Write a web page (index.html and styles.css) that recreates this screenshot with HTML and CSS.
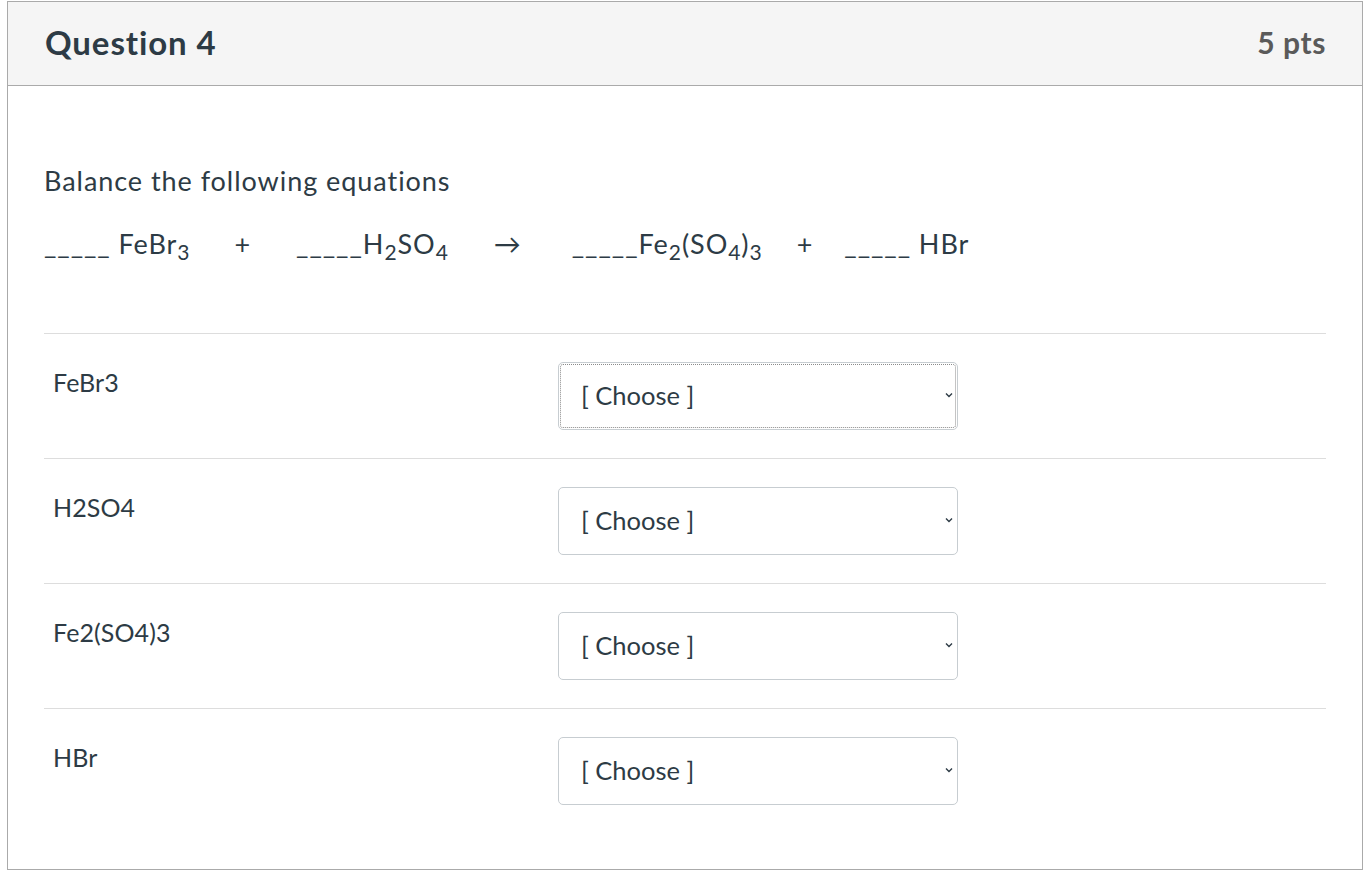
FILE: index.html
```html
<!DOCTYPE html>
<html>
<head>
<meta charset="utf-8">
<link rel="stylesheet" href="styles.css">
</head>
<body>
<div class="question">
  <div class="header">
    <div class="title">Question 4</div>
    <div class="pts">5 pts</div>
  </div>
  <div class="content">
    <p class="prompt">Balance the following equations</p>
    <div class="equation">
      <span class="t1">_____ FeBr<sub>3</sub></span>
      <span class="t2">+</span>
      <span class="t3">_____H<sub>2</sub>SO<sub>4</sub></span>
      <span class="t4">→</span>
      <span class="t5">_____Fe<sub>2</sub>(SO<sub>4</sub>)<sub>3</sub></span>
      <span class="t6">+</span>
      <span class="t7">_____ HBr</span>
    </div>
    <div class="answers">
      <div class="row">
        <div class="label">FeBr3</div>
        <div class="selwrap">
          <select class="sel focused"><option>[ Choose ]</option></select>
          <svg class="chev" width="10" height="8" viewBox="0 0 10 8"><path d="M2 2.5 L5 5.5 L8 2.5" fill="none" stroke="#2d3b45" stroke-width="1.4"/></svg>
        </div>
      </div>
      <div class="row">
        <div class="label">H2SO4</div>
        <div class="selwrap">
          <select class="sel"><option>[ Choose ]</option></select>
          <svg class="chev" width="10" height="8" viewBox="0 0 10 8"><path d="M2 2.5 L5 5.5 L8 2.5" fill="none" stroke="#2d3b45" stroke-width="1.4"/></svg>
        </div>
      </div>
      <div class="row">
        <div class="label">Fe2(SO4)3</div>
        <div class="selwrap">
          <select class="sel"><option>[ Choose ]</option></select>
          <svg class="chev" width="10" height="8" viewBox="0 0 10 8"><path d="M2 2.5 L5 5.5 L8 2.5" fill="none" stroke="#2d3b45" stroke-width="1.4"/></svg>
        </div>
      </div>
      <div class="row">
        <div class="label">HBr</div>
        <div class="selwrap">
          <select class="sel"><option>[ Choose ]</option></select>
          <svg class="chev" width="10" height="8" viewBox="0 0 10 8"><path d="M2 2.5 L5 5.5 L8 2.5" fill="none" stroke="#2d3b45" stroke-width="1.4"/></svg>
        </div>
      </div>
    </div>
  </div>
</div>
</body>
</html>
```
FILE: styles.css
```css
html, body {
  margin: 0;
  padding: 0;
  background: #fff;
}
body {
  padding: 1px 3px 0 7px;
  font-family: Lato, "Open Sans", sans-serif;
  color: #2d3b45;
}
.question {
  border: 1px solid #aaaaaa;
  box-sizing: border-box;
  height: 869px;
}
.header {
  background: #f5f5f5;
  border-bottom: 1px solid #aaaaaa;
  box-sizing: border-box;
  height: 84px;
  display: flex;
  justify-content: space-between;
  align-items: center;
  padding: 0 36px 4px 37px;
}
.title {
  font-weight: 700;
  font-size: 33px;
  letter-spacing: 0.9px;
  color: #2d3b45;
}
.pts {
  font-weight: 700;
  font-size: 30px;
  letter-spacing: 0.6px;
  color: #5a5a5a;
}
.content {
  padding: 0 36px 0 36px;
}
.prompt {
  margin: 79px 0 0 0;
  font-size: 27px;
  letter-spacing: 0.95px;
  line-height: 32px;
}
.equation {
  margin-top: 31px;
  display: flex;
  font-size: 27px;
  letter-spacing: 0.95px;
  line-height: 32px;
  white-space: pre;
}
.equation sub {
  font-size: 21px;
  vertical-align: -6px;
  line-height: 0;
}
.t2 { margin-left: 44px; }
.t3 { margin-left: 45px; }
.t4 { margin-left: 45px; }
.t5 { margin-left: 50px; }
.t6 { margin-left: 34px; }
.t7 { margin-left: 31px; }
.answers {
  margin-top: 73px;
}
.row {
  border-top: 1px solid #dddddd;
  box-sizing: border-box;
  height: 125px;
  display: flex;
  padding-top: 28px;
}
.label {
  width: 505px;
  padding-left: 9px;
  padding-top: 5px;
  font-size: 25px;
  letter-spacing: 0.1px;
  line-height: 30px;
}
.selwrap {
  position: relative;
  width: 400px;
  height: 68px;
}
.sel {
  appearance: none;
  -webkit-appearance: none;
  width: 400px;
  height: 68px;
  border: 1px solid #c7cdd1;
  border-radius: 5px;
  background: #fff;
  font-family: Lato, "Open Sans", sans-serif;
  font-size: 25.5px;
  color: #2d3b45;
  padding: 0 0 2px 22px;
  box-sizing: border-box;
}
.sel.focused {
  outline: 1px dotted #8a8a8a;
  outline-offset: -3px;
}
.chev {
  position: absolute;
  right: 4px;
  top: 29px;
}
```
